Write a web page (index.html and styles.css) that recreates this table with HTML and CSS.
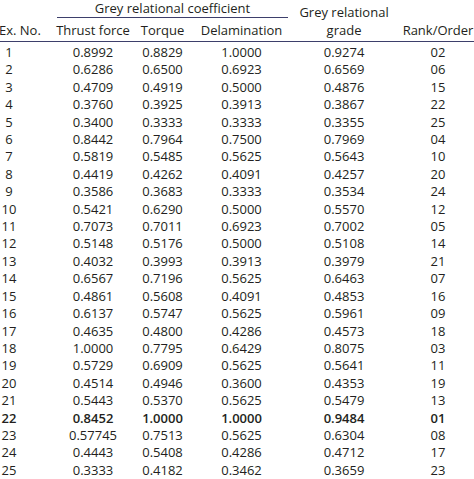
FILE: index.html
```html
<!DOCTYPE html>
<html>
<head>
<meta charset="utf-8">
<link rel="stylesheet" href="styles.css">
</head>
<body>
<table class="grt">
  <colgroup>
    <col class="c1"><col class="c2"><col class="c3"><col class="c4"><col class="c5"><col class="c6">
  </colgroup>
  <thead>
    <tr class="h1">
      <th></th>
      <th colspan="3" class="span"><span class="grp">Grey relational coefficient</span></th>
      <th class="two">Grey relational</th>
      <th></th>
    </tr>
    <tr class="h2">
      <th class="exno">Ex. No.</th>
      <th>Thrust force</th>
      <th>Torque</th>
      <th>Delamination</th>
      <th>grade</th>
      <th>Rank/Order</th>
    </tr>
  </thead>
  <tbody>
    <tr><td>1</td><td>0.8992</td><td>0.8829</td><td>1.0000</td><td>0.9274</td><td>02</td></tr>
    <tr><td>2</td><td>0.6286</td><td>0.6500</td><td>0.6923</td><td>0.6569</td><td>06</td></tr>
    <tr><td>3</td><td>0.4709</td><td>0.4919</td><td>0.5000</td><td>0.4876</td><td>15</td></tr>
    <tr><td>4</td><td>0.3760</td><td>0.3925</td><td>0.3913</td><td>0.3867</td><td>22</td></tr>
    <tr><td>5</td><td>0.3400</td><td>0.3333</td><td>0.3333</td><td>0.3355</td><td>25</td></tr>
    <tr><td>6</td><td>0.8442</td><td>0.7964</td><td>0.7500</td><td>0.7969</td><td>04</td></tr>
    <tr><td>7</td><td>0.5819</td><td>0.5485</td><td>0.5625</td><td>0.5643</td><td>10</td></tr>
    <tr><td>8</td><td>0.4419</td><td>0.4262</td><td>0.4091</td><td>0.4257</td><td>20</td></tr>
    <tr><td>9</td><td>0.3586</td><td>0.3683</td><td>0.3333</td><td>0.3534</td><td>24</td></tr>
    <tr><td>10</td><td>0.5421</td><td>0.6290</td><td>0.5000</td><td>0.5570</td><td>12</td></tr>
    <tr><td>11</td><td>0.7073</td><td>0.7011</td><td>0.6923</td><td>0.7002</td><td>05</td></tr>
    <tr><td>12</td><td>0.5148</td><td>0.5176</td><td>0.5000</td><td>0.5108</td><td>14</td></tr>
    <tr><td>13</td><td>0.4032</td><td>0.3993</td><td>0.3913</td><td>0.3979</td><td>21</td></tr>
    <tr><td>14</td><td>0.6567</td><td>0.7196</td><td>0.5625</td><td>0.6463</td><td>07</td></tr>
    <tr><td>15</td><td>0.4861</td><td>0.5608</td><td>0.4091</td><td>0.4853</td><td>16</td></tr>
    <tr><td>16</td><td>0.6137</td><td>0.5747</td><td>0.5625</td><td>0.5961</td><td>09</td></tr>
    <tr><td>17</td><td>0.4635</td><td>0.4800</td><td>0.4286</td><td>0.4573</td><td>18</td></tr>
    <tr><td>18</td><td>1.0000</td><td>0.7795</td><td>0.6429</td><td>0.8075</td><td>03</td></tr>
    <tr><td>19</td><td>0.5729</td><td>0.6909</td><td>0.5625</td><td>0.5641</td><td>11</td></tr>
    <tr><td>20</td><td>0.4514</td><td>0.4946</td><td>0.3600</td><td>0.4353</td><td>19</td></tr>
    <tr><td>21</td><td>0.5443</td><td>0.5370</td><td>0.5625</td><td>0.5479</td><td>13</td></tr>
    <tr class="best"><td>22</td><td>0.8452</td><td>1.0000</td><td>1.0000</td><td>0.9484</td><td>01</td></tr>
    <tr><td>23</td><td>0.57745</td><td>0.7513</td><td>0.5625</td><td>0.6304</td><td>08</td></tr>
    <tr><td>24</td><td>0.4443</td><td>0.5408</td><td>0.4286</td><td>0.4712</td><td>17</td></tr>
    <tr><td>25</td><td>0.3333</td><td>0.4182</td><td>0.3462</td><td>0.3659</td><td>23</td></tr>
  </tbody>
</table>
</body>
</html>
```

FILE: styles.css
```css
html, body {
  margin: 0;
  padding: 0;
  background: #ffffff;
  overflow: hidden;
}

.grt {
  border-collapse: collapse;
  table-layout: fixed;
  width: 488px;
  margin-left: -12px;
  font-family: "Open Sans", "Noto Sans", sans-serif;
  font-size: 13px;
  color: #231f20;
}

.c1 { width: 68px; }
.c2 { width: 74px; }
.c3 { width: 65px; }
.c4 { width: 93px; }
.c5 { width: 112px; }
.c6 { width: 76px; }

th {
  font-weight: normal;
  text-align: center;
  padding: 0;
  white-space: nowrap;
}

.h1 th {
  height: 18px;
  vertical-align: top;
}

.h1 .span {
  padding: 1px 0 0 1px;
}

.grp {
  display: block;
  border-bottom: 1.5px solid #3d3f6b;
  line-height: 15px;
  padding-bottom: 1px;
}

.h1 .two {
  vertical-align: bottom;
  line-height: 16px;
  padding-top: 2px;
}

.h2 th {
  height: 20px;
  border-bottom: 1.5px solid #3d3f6b;
  vertical-align: top;
  line-height: 18px;
  padding-top: 1px;
}

.h2 .exno {
  text-align: left;
  padding-left: 11px;
}

tbody tr:first-child td {
  padding-top: 2px;
}

td {
  padding: 0;
  height: 17.4px;
  line-height: 17.4px;
  text-align: center;
  white-space: nowrap;
}

td:first-child {
  padding-right: 26px;
}

.best td {
  font-weight: 600;
}
```
